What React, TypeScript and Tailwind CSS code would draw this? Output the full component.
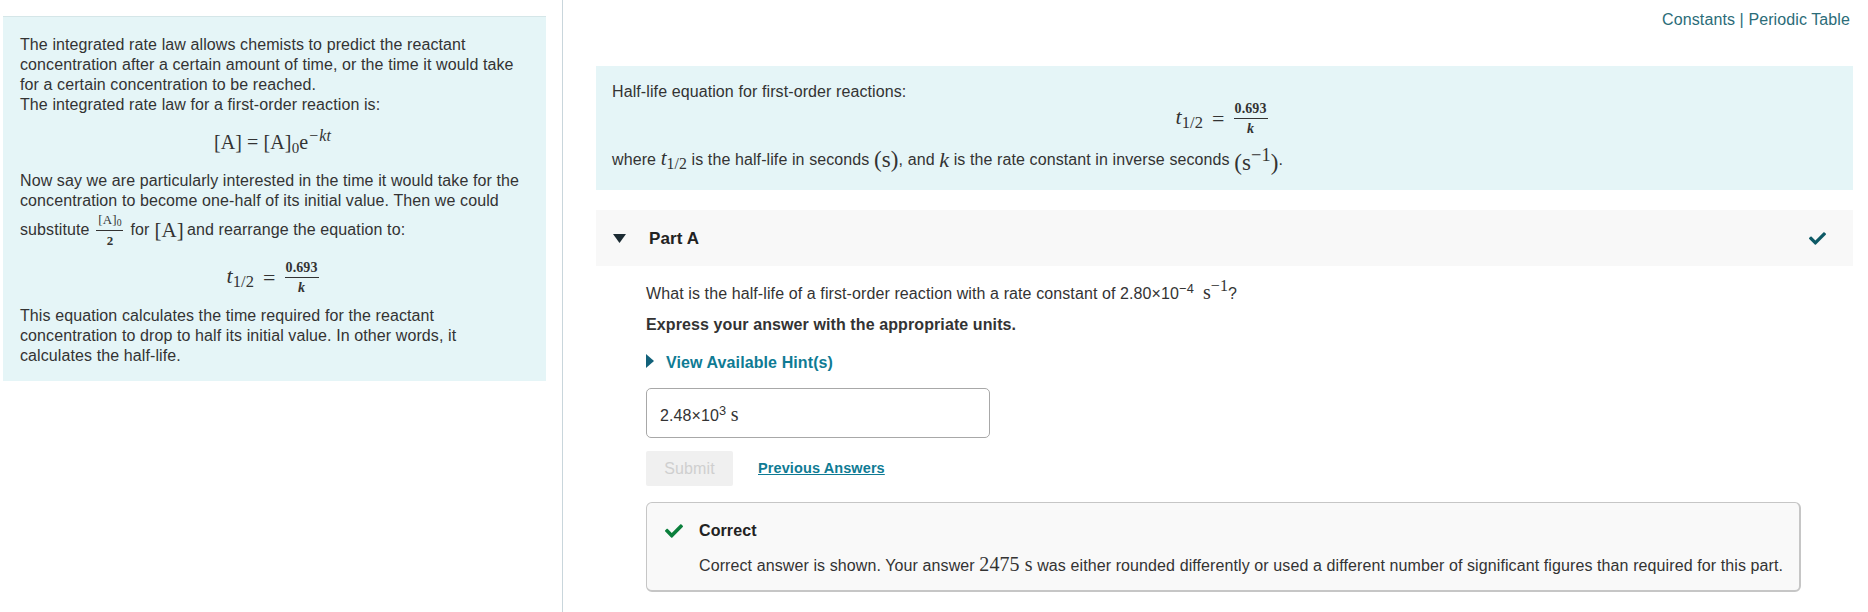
import { FaCheck } from "react-icons/fa";
import { ReactNode } from "react";

const serif = "font-['Liberation_Serif',serif]";

function Sup({ children, className = "" }: { children: ReactNode; className?: string }) {
  return <span className={`text-[80%] leading-none align-[0.5em] ${className}`}>{children}</span>
}

function Sub({ children }: { children: ReactNode }) {
  return <span className="text-[75%] leading-none align-[-0.25em]">{children}</span>
}

function Frac({ top, bottom, className = "" }: { top: ReactNode; bottom: ReactNode; className?: string }) {
  return <span className={`inline-flex flex-col items-center align-middle leading-none ${className}`}>
    <span className="px-[1px] pb-[2px]">{top}</span>
    <span className="w-full h-[1px] bg-[#333]"></span>
    <span className="pt-[3px]">{bottom}</span>
  </span>
}

function HalfLife() {
  return <span className={`${serif} text-[22px] leading-none whitespace-nowrap inline-flex items-center`}>
    <span><i>t</i><Sub>1/2</Sub></span>
    <span className="mx-[9px]">=</span>
    <Frac className="text-[14px] font-bold" top="0.693" bottom={<i>k</i>} />
  </span>
}

export default function App() {
  return <div className="h-[612px] w-full flex overflow-hidden bg-white text-[#333] text-[16px] leading-[20px] tracking-[0.1px] font-['Liberation_Sans',Arial,sans-serif]">
    <div className="w-[563px] shrink-0 border-r border-[#c9d6dc] pt-4 pl-[3px]">
      <div className="w-[543px] h-[365px] bg-[#e5f5f7] border-t border-[#d5e6e8] pl-[17px] pr-[21px] pt-[18px]">
        <p>The integrated rate law allows chemists to predict the reactant concentration after a certain amount of time, or the time it would take for a certain concentration to be reached.<br />The integrated rate law for a first-order reaction is:</p>
        <div className={`${serif} text-[20px] leading-[26px] text-center mt-[13px] h-[26px]`}>
          [A] = [A]<Sub>0</Sub>e<Sup><span className="mx-[1px]">−</span><i>kt</i></Sup>
        </div>
        <p className="mt-[17px]">Now say we are particularly interested in the time it would take for the concentration to become one-half of its initial value. Then we could</p>
        <div className="flex items-center h-[36px] mt-[1px]">
          substitute
          <Frac className={`${serif} text-[13px] mx-[7px] w-[27px]`} top={<span>[A]<Sub>0</Sub></span>} bottom={<span className="font-bold">2</span>} />
          for
          <span className={`${serif} text-[21px] ml-[5px] mr-[3px]`}>[A]</span>
          and rearrange the equation to:
        </div>
        <div className="text-center mt-[13px] h-[36px]">
          <HalfLife />
        </div>
        <p className="mt-[9px]">This equation calculates the time required for the reactant concentration to drop to half its initial value. In other words, it calculates the half-life.</p>
      </div>
    </div>

    <div className="flex-1 pl-[33px] pr-[15px]">
      <div className="h-[66px] pt-[10px] text-right pr-[3px] text-[#2b6c78]">Constants | Periodic Table</div>

      <div className="h-[124px] bg-[#e5f5f7] pl-[16px] pt-[16px]">
        <div>Half-life equation for first-order reactions:</div>
        <div className="text-center h-[36px] pr-[22px]"><HalfLife /></div>
        <div className="mt-[10px] flex items-center whitespace-pre h-[24px]">
          where <span className={`${serif} text-[21px]`}><i>t</i><Sub>1/2</Sub></span> is the half-life in seconds <span className={`${serif} text-[23px]`}>(s)</span>, and <i className={`${serif} text-[22px]`}>k</i> is the rate constant in inverse seconds <span className={`${serif} text-[23px]`}>(s<Sup className="text-[70%]">−1</Sup>)</span>.
        </div>
      </div>

      <div className="mt-5 h-[56px] bg-[#f8f8f8] flex items-center pl-[17px] pr-[27px]">
        <svg width="13" height="9" viewBox="0 0 13 9" className="shrink-0"><polygon points="0,0 13,0 6.5,9" fill="#1c2b33" /></svg>
        <span className="ml-[23px] mt-[2px] font-bold text-[17px] text-[#222] flex-1">Part A</span>
        <FaCheck className="text-[17px] text-[#0e5a66]" />
      </div>

      <div className="pl-[50px]">
        <div className="mt-[12px] whitespace-pre h-5">What is the half-life of a first-order reaction with a rate constant of 2.80×10<Sup>−4</Sup>  <span className={`${serif} text-[20px]`}>s<Sup>−1</Sup></span>?</div>
        <div className="mt-[17px] font-bold">Express your answer with the appropriate units.</div>
        <div className="mt-[18px] flex items-center font-bold text-[#0f7b94]">
          <svg width="8" height="14" viewBox="0 0 8 14" className="mb-[4px]"><polygon points="0,0 8,7 0,14" fill="#12617a" /></svg>
          <span className="ml-[12px]">View Available Hint(s)</span>
        </div>
        <div className="mt-[15px] w-[344px] h-[50px] border border-[#a8a8a8] rounded-[5px] pl-[13px] pt-[15px] whitespace-pre">
          2.48×10<Sup>3</Sup> <span className={`${serif} text-[20px]`}>s</span>
        </div>
        <div className="mt-[13px] flex items-center">
          <button className="w-[87px] h-[35px] bg-[#f0f0f0] text-[#cfcfcf] rounded-[2px]">Submit</button>
          <a className="ml-[25px] mb-[2px] font-bold text-[14.5px] text-[#0f7b94] underline">Previous Answers</a>
        </div>
        <div className="mt-4 w-[1155px] h-[90px] bg-[#f9f9f9] border border-[#c6c6c6] border-b-2 border-r-2 rounded-[6px] pl-[18px] pt-[18px]">
          <div className="flex items-center font-bold text-[#222]">
            <FaCheck className="text-[18px] text-[#0b7f3c]" />
            <span className="ml-[16px]">Correct</span>
          </div>
          <div className="ml-[34px] mt-[13px] whitespace-pre">
            Correct answer is shown. Your answer <span className={`${serif} text-[20px] leading-none`}>2475 s</span> was either rounded differently or used a different number of significant figures than required for this part.
          </div>
        </div>
      </div>
    </div>
  </div>
}
